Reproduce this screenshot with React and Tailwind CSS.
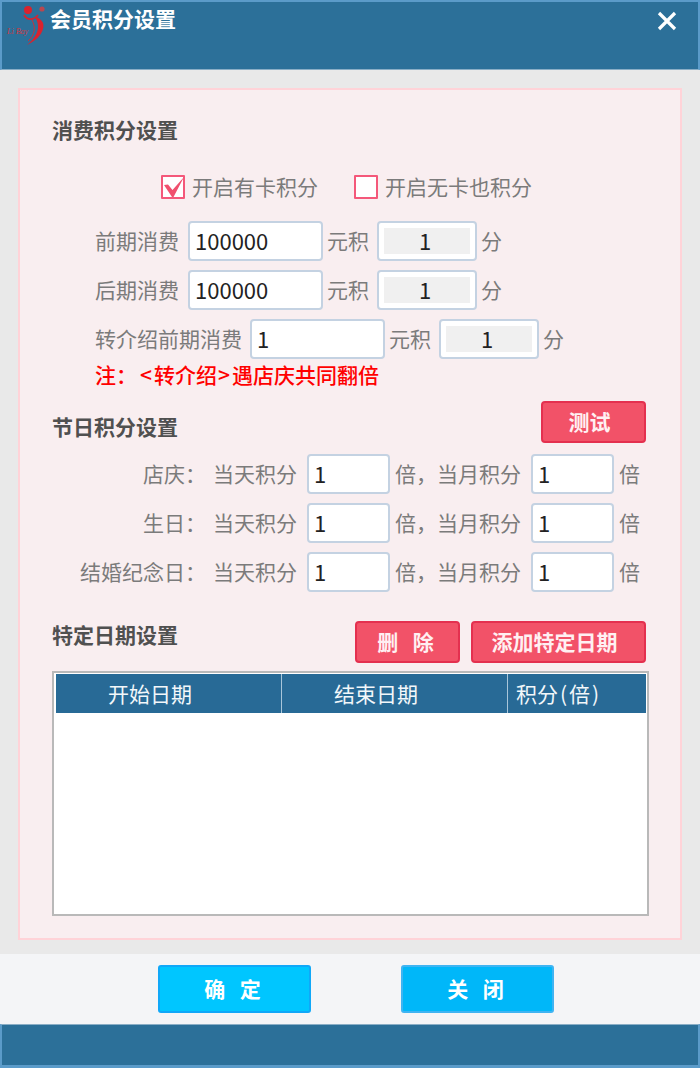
import React from 'react';

const labelText = 'text-[21px] leading-[28px] text-[#7b7b7b] whitespace-nowrap pb-[3px]';
const titleText = 'text-[21px] leading-[28px] font-bold text-[#505050] whitespace-nowrap';

const TextBox = ({ value, width }) => (
  <input
    readOnly
    value={value}
    className={`${width} h-[40px] pl-[5px] pb-[2px] bg-white border-2 border-[#c4d2e2] rounded-[4px] text-[22px] text-[#222] outline-none`}
  />
);

const ScoreBox = ({ value }) => (
  <div className="w-[100px] h-[40px] p-[5px] bg-white border-2 border-[#c4d2e2] rounded-[4px]">
    <input
      readOnly
      value={value}
      className="w-full h-full pr-[4px] pb-[2px] bg-[#f0f0f0] text-center text-[22px] leading-none text-[#222] outline-none"
    />
  </div>
);

const RedButton = ({ children, width }) => (
  <button className={`${width} h-[42px] bg-[#f25268] border-2 border-[#e4304f] rounded-[4px] text-[21px] font-bold text-[#fff0f2] whitespace-pre`}>
    {children}
  </button>
);

const Checkbox = ({ checked, label }) => (
  <div className="flex items-center gap-[7px]">
    <div className="w-[24px] h-[24px] bg-white border-2 border-[#f4587a] rounded-[1px]">
      {checked && (
        <svg width="20" height="20" viewBox="0 0 20 20" className="overflow-visible">
          <path d="M1 8 L5 7.5 L9.5 13 L21 0 L10.5 20 L9 20 Z" fill="#f0506e" />
        </svg>
      )}
    </div>
    <span className={labelText}>{label}</span>
  </div>
);

const ConsumeRow = ({ label, value, className, labelGap }) => (
  <div className={`flex items-center ml-[43px] ${className}`}>
    <span className={`${labelText} ${labelGap}`}>{label}</span>
    <TextBox value={value} width="w-[135px]" />
    <span className={`${labelText} ml-[4px] mr-[8px]`}>元积</span>
    <ScoreBox value="1" />
    <span className={`${labelText} ml-[4px]`}>分</span>
  </div>
);

const HolidayRow = ({ label, className }) => (
  <div className={`flex items-center ${className}`}>
    <span className={`${labelText} w-[154px] text-right`}>{label}</span>
    <span className={`${labelText} ml-[7px] mr-[10px]`}>当天积分</span>
    <TextBox value="1" width="w-[83px]" />
    <span className={`${labelText} ml-[5px] mr-[10px]`}>倍，当月积分</span>
    <TextBox value="1" width="w-[83px]" />
    <span className={`${labelText} ml-[5px]`}>倍</span>
  </div>
);

const Logo = () => (
  <svg width="50" height="50" viewBox="0 0 50 50" className="absolute left-[-2px] top-[-2px]">
    <circle cx="28" cy="10" r="4" fill="#d9232e" />
    <circle cx="42" cy="9" r="2.6" fill="#b9474f" />
    <path d="M24 15 C27 20 33 21 38 15" stroke="#d9232e" strokeWidth="1.6" fill="none" />
    <path d="M35 17 C41 18 45 23 43 29 C41 36 35 41 27 45 C34 39 38 33 38 27 C38 23 37 20 35 17 Z" fill="#d9232e" />
    <path d="M32 20 C36 27 35 35 28 41" stroke="#c9303a" strokeWidth="1" fill="none" />
    <text x="7" y="34" fontSize="8" fontStyle="italic" fill="#cf3a42" fontFamily="'Liberation Serif', serif">Li Bay</text>
  </svg>
);

export default function App() {
  return (
    <div className="w-[700px] h-[1068px] flex flex-col bg-[#e9e9e9] overflow-hidden font-['Noto_Sans_CJK_SC','Noto_Sans',sans-serif]">
      {/* header */}
      <div className="relative h-[70px] shrink-0 bg-[#2c7099] border-t-2 border-x-2 border-t-[#5b9bc9] border-x-[#5b9bc9] border-b border-b-[#8aaec6]">
        <Logo />
        <div className="pl-[48px] pt-[2px] text-[21px] leading-[28px] font-bold text-white">会员积分设置</div>
        <svg width="20" height="20" viewBox="0 0 20 20" className="absolute right-[21px] top-[9px]">
          <path d="M2 2 L18 18 M18 2 L2 18" stroke="white" strokeWidth="3.2" />
        </svg>
      </div>

      {/* body */}
      <div className="flex-1 px-[18px] pt-[18px]">
        <div className="h-[852px] bg-[#f9eef0] border-2 border-[#ffd3d8] pl-[32px] pt-[25px]">
          <div className={titleText}>消费积分设置</div>

          <div className="flex items-center gap-[36px] ml-[109px] mt-[32px] h-[24px]">
            <Checkbox checked label="开启有卡积分" />
            <Checkbox label="开启无卡也积分" />
          </div>

          <ConsumeRow className="mt-[22px]" labelGap="mr-[9px]" label="前期消费" value="100000" />
          <ConsumeRow className="mt-[9px]" labelGap="mr-[9px]" label="后期消费" value="100000" />
          <ConsumeRow className="mt-[9px]" labelGap="mr-[8px]" label="转介绍前期消费" value="1" />

          <div className="ml-[43px] mt-[1px] text-[21px] leading-[28px] text-[#ff0000] whitespace-nowrap font-medium">
            注：<span className="ml-[3px] mr-[2px]">&lt;</span>转介绍<span className="ml-[1px] mr-[2px]">&gt;</span>遇店庆共同翻倍
          </div>

          <div className="w-[594px] flex justify-between mt-[13px]">
            <div className={`${titleText} mt-[11px]`}>节日积分设置</div>
            <RedButton width="w-[105px] pr-[8px]">测试</RedButton>
          </div>

          <HolidayRow label="店庆：" className="mt-[11px]" />
          <HolidayRow label="生日：" className="mt-[9px]" />
          <HolidayRow label="结婚纪念日：" className="mt-[9px]" />

          <div className="w-[594px] flex items-start mt-[29px]">
            <div className={`${titleText} -mt-px mr-auto`}>特定日期设置</div>
            <RedButton width="w-[105px] mr-[11px] pr-[4px]">{'删   除'}</RedButton>
            <RedButton width="w-[175px] pr-[8px]">添加特定日期</RedButton>
          </div>

          <div className="w-[597px] h-[245px] mt-[8px] bg-white border-2 border-[#b9b9b9] pt-[1px] pl-[2px] pr-[1px]">
            <div className="h-[39px] flex bg-[#286a96] text-[21px] leading-[39px] text-[#f2f7fa]">
              <div className="w-[226px] pl-[52px] border-r border-[#a9c6da]">开始日期</div>
              <div className="w-[226px] pl-[52px] border-r border-[#a9c6da]">结束日期</div>
              <div className="flex-1 pl-[8px] whitespace-nowrap">
                积分<span className="mx-[2px]">(</span>倍<span className="ml-[2px]">)</span>
              </div>
            </div>
          </div>
        </div>
      </div>

      {/* footer */}
      <div className="h-[70px] shrink-0 bg-[#f4f5f7] flex items-center pl-[158px]">
        <button className="w-[153px] h-[48px] pr-[4px] bg-[#00c6ff] border-2 border-[#10a8f8] rounded-[3px] text-[21px] font-bold text-white whitespace-pre">{'确   定'}</button>
        <button className="w-[153px] h-[48px] pr-[4px] ml-[90px] bg-[#00b7f9] border-2 border-[#3fb4f2] rounded-[3px] text-[21px] font-bold text-white whitespace-pre">{'关   闭'}</button>
      </div>

      {/* bottom bar */}
      <div className="h-[44px] shrink-0 bg-[#2c7099] border-x-2 border-b-[3px] border-t border-x-[#5b9bc9] border-b-[#5b9bc9] border-t-[#8aaec6]" />
    </div>
  );
}
